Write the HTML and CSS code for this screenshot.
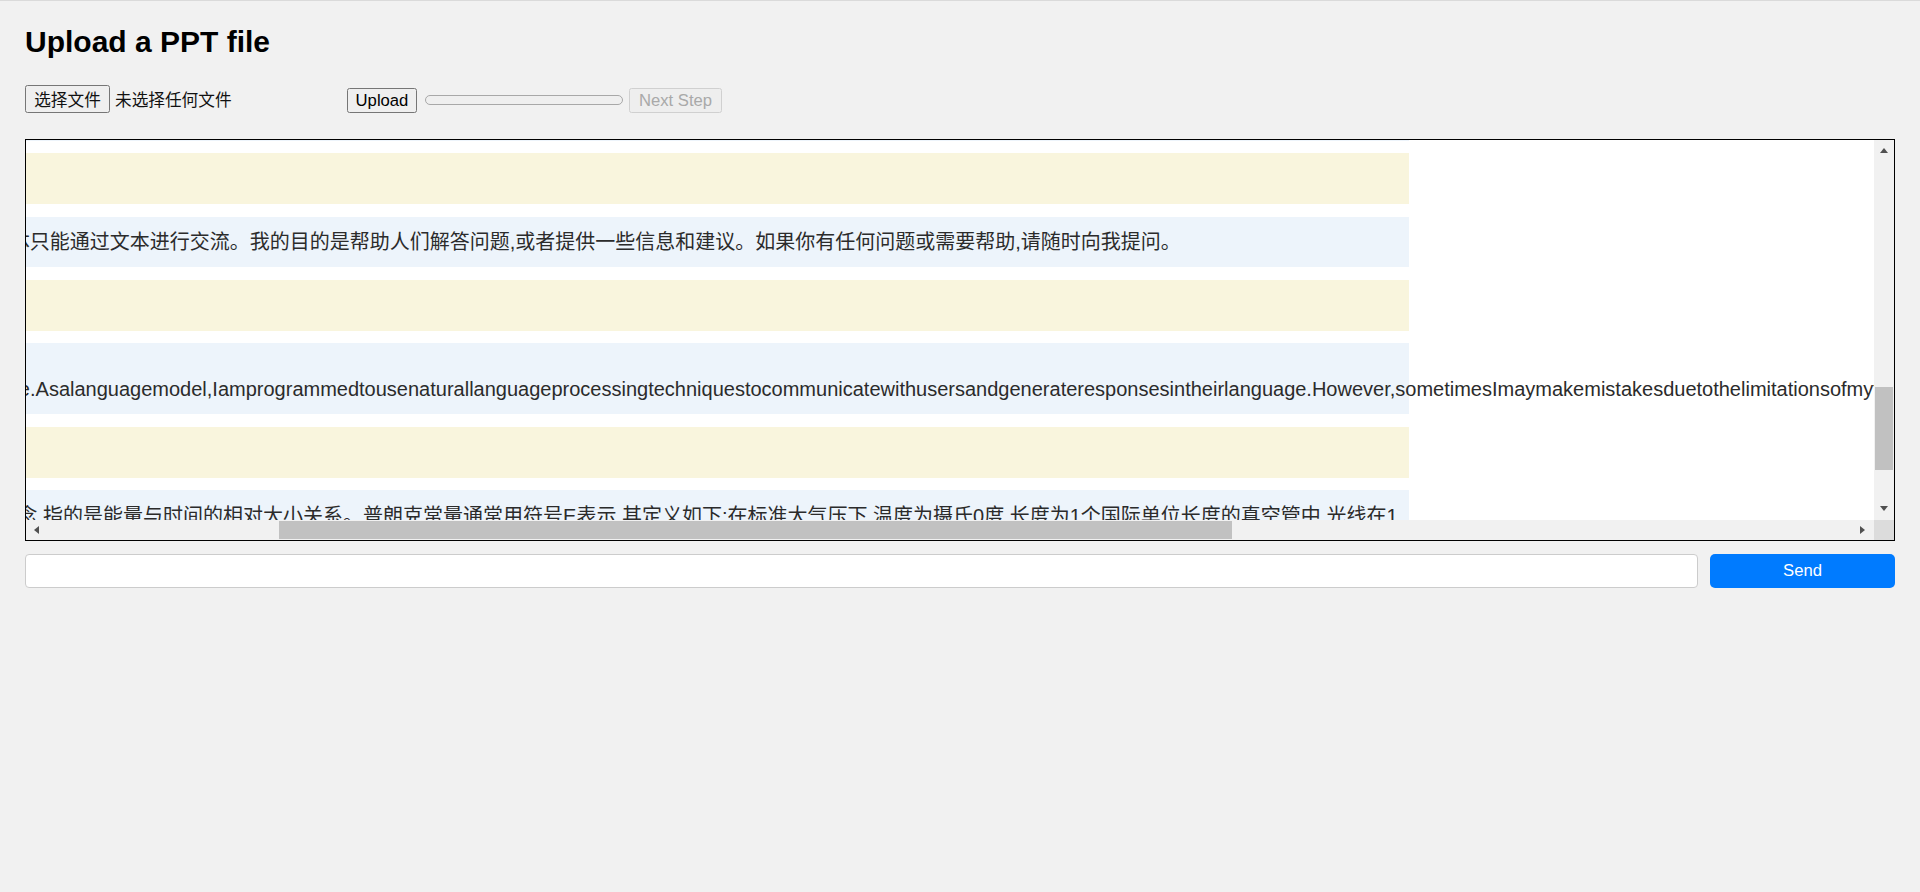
FILE: index.html
```html
<!DOCTYPE html>
<html lang="zh-CN">
<head>
<meta charset="utf-8">
<title>Upload a PPT file</title>
<link rel="stylesheet" href="styles.css">
</head>
<body>
<h2 class="title">Upload a PPT file</h2>
<div class="controls">
  <div class="file">
    <span class="file-btn">选择文件</span>
    <span class="file-text">未选择任何文件</span>
  </div>
  <button class="btn upload">Upload</button>
  <div class="progress"></div>
  <button class="btn next" disabled>Next Step</button>
</div>
<div class="chat">
  <div class="viewport" id="viewport">
    <div class="msg user">你好</div>
    <div class="msg bot">你好！我是一个人工智能助手。<br>很高兴认识你。<br>有什么我可以帮助你的吗？</div>
    <div class="msg user">今天天气怎么样？</div>
    <div class="msg bot">抱歉,我无法获取实时的天气信息。<br>建议你查看当地的天气预报。</div>
    <div class="msg user">给我讲个笑话吧</div>
    <div class="msg bot">好的。为什么数学书总是很忧郁？<br>因为它有太多的问题。</div>
    <div class="msg user">你会写诗吗？</div>
    <div class="msg bot">当然可以,这是一首小诗：<br>春风拂面花自开,<br>明月照人归去来。</div>
    <div class="msg user">1+1等于几？</div>
    <div class="msg bot">1+1等于2。<br>这是最基本的加法运算。</div>
    <div class="msg user">谢谢你</div>
    <div class="msg bot">不客气,很高兴能帮到你。</div>
    <div class="msg user">你是谁？</div>
    <div class="msg bot">我是一个AI助手。<br>我可以回答问题、提供信息和建议。</div>
    <div class="msg user" id="anchor">你有身体吗？</div>
    <div class="msg bot">我是ChatGPT，一个人工智能语言模型，没有身体只能通过文本进行交流。我的目的是帮助人们解答问题,或者提供一些信息和建议。如果你有任何问题或需要帮助,请随时向我提问。</div>
    <div class="msg user">Can you speak English?</div>
    <div class="msg bot">Yes, I can speak English. Englishisoneofthemostwidelyusedlanguagesforme.Asalanguagemodel,Iamprogrammedtousenaturallanguageprocessingtechniquestocommunicatewithusersandgenerateresponsesintheirlanguage.However,sometimesImaymakemistakesduetothelimitationsofmytrainingdata.Pleaseletmeknowifyounoticeanyerrors.</div>
    <div class="msg user">什么是普朗克常量？</div>
    <div class="msg bot">普朗克常量是一个基本常数,同时,也是一个物理概念,指的是能量与时间的相对大小关系。普朗克常量通常用符号E表示,其定义如下:在标准大气压下,温度为摄氏0度,长度为1个国际单位长度的真空管中,光线在1秒内传播的距离。这个常数在量子力学中非常重要,它描述了光子能量与频率之间的关系。<br>希望这个解释对你有帮助。</div>
    <div class="msg user">谢谢<div class="spacer"></div></div>
  </div>
  <div class="vbar">
    <div class="sb-btn"><span class="arrow arrow-up"></span></div>
    <div class="vtrack"><div class="vthumb"></div></div>
    <div class="sb-btn"><span class="arrow arrow-down"></span></div>
  </div>
  <div class="hbar">
    <div class="sb-btn"><span class="arrow arrow-left"></span></div>
    <div class="htrack"><div class="hthumb"></div></div>
    <div class="sb-btn"><span class="arrow arrow-right"></span></div>
  </div>
  <div class="corner"></div>
</div>
<div class="composer">
  <input class="input" type="text">
  <button class="send">Send</button>
</div>
<script src="script.js"></script>
</body>
</html>
```

FILE: styles.css
```css
html, body {
  margin: 0;
}

body {
  box-sizing: border-box;
  min-height: 892px;
  padding: 0 25px;
  border-top: 1px solid #dadada;
  background: #f1f1f1;
  font-family: "Liberation Sans", "Noto Sans CJK SC", sans-serif;
  color: #000;
}

.title {
  margin: 24px 0 0;
  font-size: 30px;
  line-height: 34.5px;
  font-weight: bold;
  color: #000;
}

.controls {
  display: flex;
  align-items: flex-end;
  height: 28px;
  margin-top: 25.5px;
}

.file {
  flex: none;
  display: flex;
  align-items: center;
  width: 316px;
  height: 28px;
}

.file-btn {
  box-sizing: border-box;
  display: flex;
  align-items: center;
  justify-content: center;
  width: 85px;
  height: 28px;
  background: #efefef;
  border: 1px solid #767676;
  border-radius: 2.5px;
  font-size: 16.67px;
  color: #111;
}

.file-text {
  margin-left: 5px;
  font-size: 16.67px;
  color: #111;
}

.btn {
  flex: none;
  box-sizing: border-box;
  height: 25px;
  padding: 0;
  font-family: "Liberation Sans", "Noto Sans CJK SC", sans-serif;
  font-size: 16.67px;
  background: #efefef;
  border: 1px solid #767676;
  border-radius: 2.5px;
  color: #000;
}

.upload {
  width: 70px;
  margin-left: 6px;
}

.progress {
  flex: none;
  box-sizing: border-box;
  width: 198px;
  height: 10px;
  margin: 0 0 8px 8px;
  border: 1px solid #a8a8a8;
  border-radius: 5px;
  background: #efefef;
}

.next {
  width: 93px;
  margin-left: 6px;
  color: #a9a9a9;
  background: #eeeeee;
  border-color: #d0d0d0;
}

/* chat box with drawn scrollbars */
.chat {
  box-sizing: border-box;
  height: 402px;
  margin-top: 26px;
  border: 1px solid #000;
  background: #fff;
  display: grid;
  grid-template-columns: minmax(0, 1fr) 20px;
  grid-template-rows: minmax(0, 1fr) 20px;
}

.viewport {
  min-width: 0;
  min-height: 0;
  overflow: hidden;
  padding: 13px 0;
  display: flex;
  flex-direction: column;
  gap: 12.6px;
}

.msg {
  flex: none;
  margin-right: 10px;
  padding: 15.4px 9px 15.4px 15.4px;
  font-size: 20px;
  line-height: 20px;
  color: #2b2b2b;
}

.user {
  background: #f9f5dd;
}

.bot {
  background: #edf4fb;
}

.spacer {
  width: 3495px;
  height: 0;
}

.vbar {
  display: flex;
  flex-direction: column;
  background: #f1f1f1;
}

.hbar {
  display: flex;
  background: #f1f1f1;
}

.corner {
  background: #dcdcdc;
}

.sb-btn {
  flex: none;
  width: 20px;
  height: 20px;
  display: flex;
  align-items: center;
  justify-content: center;
}

.vtrack {
  flex: 1;
  display: flex;
  flex-direction: column;
}

.vthumb {
  flex: none;
  height: 83px;
  margin: 227px 1px 0;
  background: #c1c1c1;
}

.htrack {
  flex: 1;
  display: flex;
}

.hthumb {
  flex: none;
  width: 953px;
  margin: 1px 0 1px 233px;
  background: #c1c1c1;
}

.arrow {
  display: block;
  width: 0;
  height: 0;
  border-style: solid;
  border-color: transparent;
}

.arrow-up {
  border-width: 0 4.5px 5px;
  border-bottom-color: #505050;
  margin-top: 1px;
}

.arrow-down {
  border-width: 5px 4.5px 0;
  border-top-color: #505050;
  margin-top: -3px;
}

.arrow-left {
  border-width: 4.5px 5px 4.5px 0;
  border-right-color: #505050;
}

.arrow-right {
  border-width: 4.5px 0 4.5px 5px;
  border-left-color: #505050;
  margin-left: -4px;
}

.composer {
  display: flex;
  gap: 12px;
  margin-top: 13px;
}

.input {
  flex: 1;
  min-width: 0;
  box-sizing: border-box;
  height: 34px;
  padding: 0 10px;
  border: 1px solid #ccc;
  border-radius: 4px;
  background: #fff;
  font-family: "Liberation Sans", "Noto Sans CJK SC", sans-serif;
  font-size: 16.67px;
  outline: none;
}

.send {
  flex: none;
  box-sizing: border-box;
  width: 185px;
  height: 34px;
  border: 0;
  border-radius: 5px;
  background: #007bff;
  color: #fff;
  font-family: "Liberation Sans", "Noto Sans CJK SC", sans-serif;
  font-size: 16.67px;
}
```

FILE: script.js
```js
(function () {
  function place() {
    var box = document.getElementById('viewport');
    var anchor = document.getElementById('anchor');
    box.scrollTop = 0;
    var top = anchor.getBoundingClientRect().top - box.getBoundingClientRect().top - 13;
    box.scrollTop = top;
    box.scrollLeft = 455;
  }
  place();
  window.addEventListener('load', place);
})();
```
